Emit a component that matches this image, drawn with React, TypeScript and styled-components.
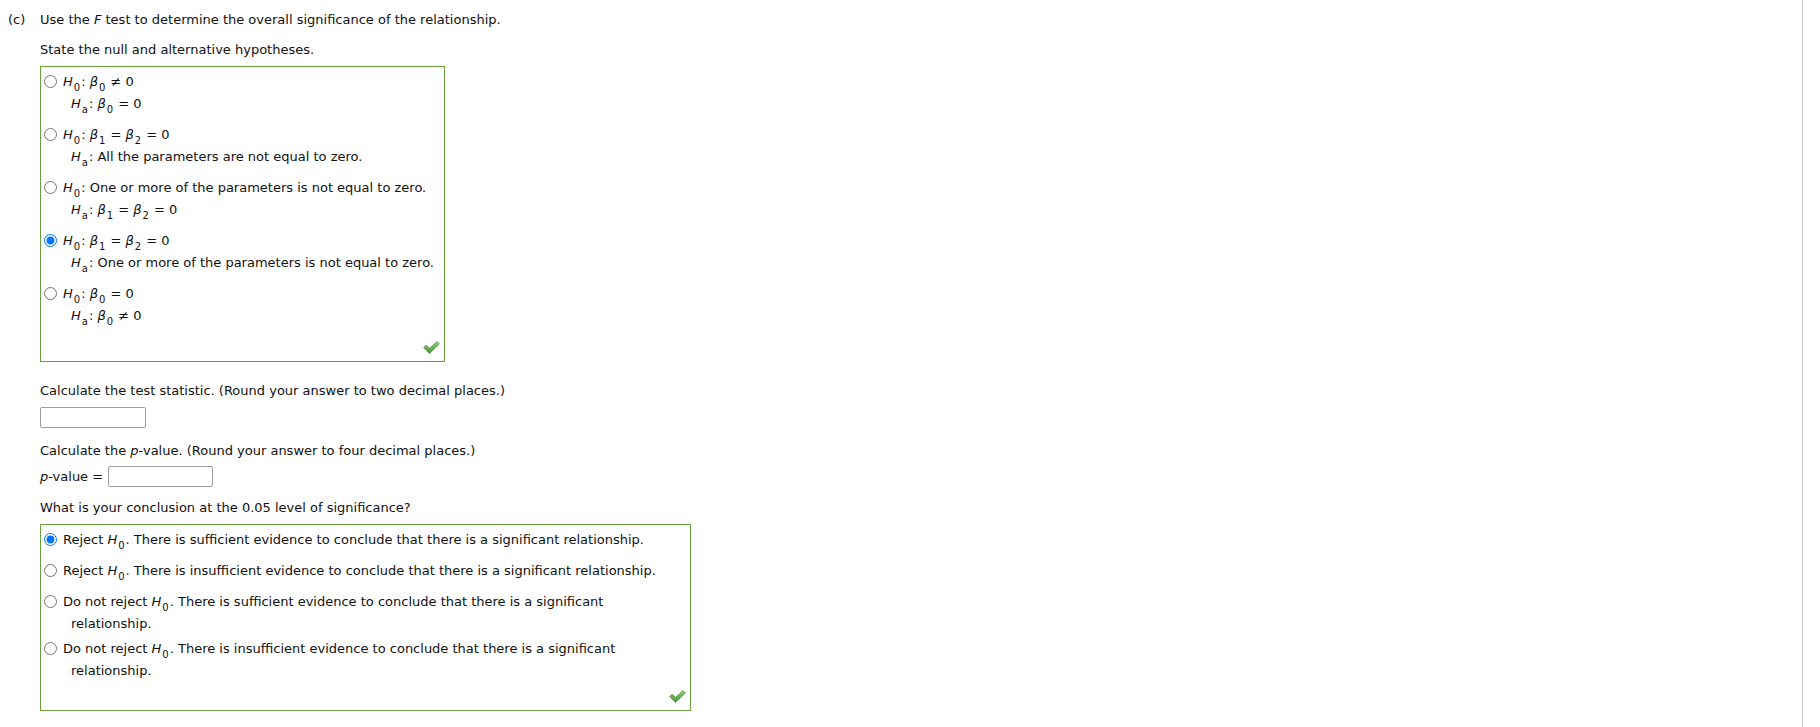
import { useId } from 'react';
import styled, { createGlobalStyle } from 'styled-components';

const GlobalStyle = createGlobalStyle`
  html, body {
    margin: 0;
    padding: 0;
    background: #fff;
  }

  body {
    font-family: "DejaVu Sans", Verdana, sans-serif;
    font-size: 13px;
    color: #111;
  }
`;

const Page = styled.div`
  box-sizing: border-box;
  width: 1803px;
  min-height: 100vh;
  padding: 12px 0 0 8px;
  border-right: 1px solid #c4c4c4;
  line-height: 16px;
`;

const Part = styled.div`
  display: flex;
`;

const PartLabel = styled.div`
  flex: none;
  width: 32px;
`;

const PartBody = styled.div`
  flex: 1;
  min-width: 0;
`;

const Para = styled.p<{ $gap?: number }>`
  margin: ${(p) => p.$gap ?? 0}px 0 0;
`;

const V = styled.i`
  font-style: italic;
`;

const Sub = styled.sub`
  padding: 0 1px 0 1px;
  font-size: 10px;
  font-style: normal;
  line-height: 16px;
  vertical-align: -5px;
`;

const AnswerBox = styled.div`
  box-sizing: border-box;
  width: fit-content;
  max-width: 651px;
  margin-top: 8px;
  padding: 7px 10px 5px 0;
  border: 1px solid #6ba03a;
`;

const Option = styled.label`
  display: block;
  padding-left: 30px;
  text-indent: -27px;

  & + & {
    margin-top: 9px;
  }
`;

const Radio = styled.input.attrs({ type: 'radio' })`
  width: 13px;
  height: 13px;
  margin: 0 6px 0 0;
  vertical-align: -2px;
`;

const CheckRow = styled.div`
  display: flex;
  justify-content: flex-end;
  align-items: center;
  height: 17px;
  margin: 9px -6px 0 0;
`;

const FieldRow = styled.div<{ $gap: number }>`
  display: flex;
  align-items: center;
  gap: 5px;
  margin-top: ${(p) => p.$gap}px;
`;

const AnswerInput = styled.input.attrs({ type: 'text' })<{ $w: number }>`
  box-sizing: border-box;
  width: ${(p) => p.$w}px;
  height: 21px;
  margin: 0;
  padding: 0 4px;
  border: 1px solid #9c9c9c;
  border-radius: 2px;
  font: inherit;
  background: #fff;
`;

const CheckMark = () => {
  const id = useId();
  return (
    <svg width="17" height="13" viewBox="0 0 17 13">
      <defs>
        <linearGradient id={id} x1="0" y1="0" x2="0" y2="1">
          <stop offset="0" stopColor="#8fce78" />
          <stop offset="1" stopColor="#4a9137" />
        </linearGradient>
      </defs>
      <path
        d="M0.6 6.6 L3.1 4.1 L6.5 7.4 L13.9 0.5 L16.4 3 L6.5 12.5 Z"
        fill={`url(#${id})`}
        stroke="#4f8f3c"
        strokeWidth="0.7"
        strokeLinejoin="round"
      />
    </svg>
  );
};

const H = ({ s }: { s: string }) => (
  <>
    <V>H</V>
    <Sub>{s}</Sub>
  </>
);

const B = ({ s }: { s: string }) => (
  <>
    <V>β</V>
    <Sub>{s}</Sub>
  </>
);

const App = () => {
  return (
    <>
      <GlobalStyle />
      <Page>
        <Part>
          <PartLabel>(c)</PartLabel>
          <PartBody>
            <Para>
              Use the <V>F</V> test to determine the overall significance of the relationship.
            </Para>
            <Para $gap={14}>State the null and alternative hypotheses.</Para>

            <AnswerBox>
              <Option>
                <Radio name="hyp" />
                <H s="0" />: <B s="0" /> ≠ 0
                <br />
                <H s="a" />: <B s="0" /> = 0
              </Option>
              <Option>
                <Radio name="hyp" />
                <H s="0" />: <B s="1" /> = <B s="2" /> = 0
                <br />
                <H s="a" />: All the parameters are not equal to zero.
              </Option>
              <Option>
                <Radio name="hyp" />
                <H s="0" />: One or more of the parameters is not equal to zero.
                <br />
                <H s="a" />: <B s="1" /> = <B s="2" /> = 0
              </Option>
              <Option>
                <Radio name="hyp" defaultChecked />
                <H s="0" />: <B s="1" /> = <B s="2" /> = 0
                <br />
                <H s="a" />: One or more of the parameters is not equal to zero.
              </Option>
              <Option>
                <Radio name="hyp" />
                <H s="0" />: <B s="0" /> = 0
                <br />
                <H s="a" />: <B s="0" /> ≠ 0
              </Option>
              <CheckRow>
                <CheckMark />
              </CheckRow>
            </AnswerBox>

            <Para $gap={21}>
              Calculate the test statistic. (Round your answer to two decimal places.)
            </Para>
            <FieldRow $gap={8}>
              <AnswerInput $w={106} />
            </FieldRow>

            <Para $gap={15}>
              Calculate the <V>p</V>-value. (Round your answer to four decimal places.)
            </Para>
            <FieldRow $gap={7}>
              <span>
                <V>p</V>-value =
              </span>
              <AnswerInput $w={105} />
            </FieldRow>

            <Para $gap={13}>What is your conclusion at the 0.05 level of significance?</Para>

            <AnswerBox>
              <Option>
                <Radio name="concl" defaultChecked />
                Reject <H s="0" />. There is sufficient evidence to conclude that there is a
                significant relationship.
              </Option>
              <Option>
                <Radio name="concl" />
                Reject <H s="0" />. There is insufficient evidence to conclude that there is a
                significant relationship.
              </Option>
              <Option>
                <Radio name="concl" />
                Do not reject <H s="0" />. There is sufficient evidence to conclude that there is a
                significant relationship.
              </Option>
              <Option>
                <Radio name="concl" />
                Do not reject <H s="0" />. There is insufficient evidence to conclude that there is
                a significant relationship.
              </Option>
              <CheckRow>
                <CheckMark />
              </CheckRow>
            </AnswerBox>
          </PartBody>
        </Part>
      </Page>
    </>
  );
};

export default App;
